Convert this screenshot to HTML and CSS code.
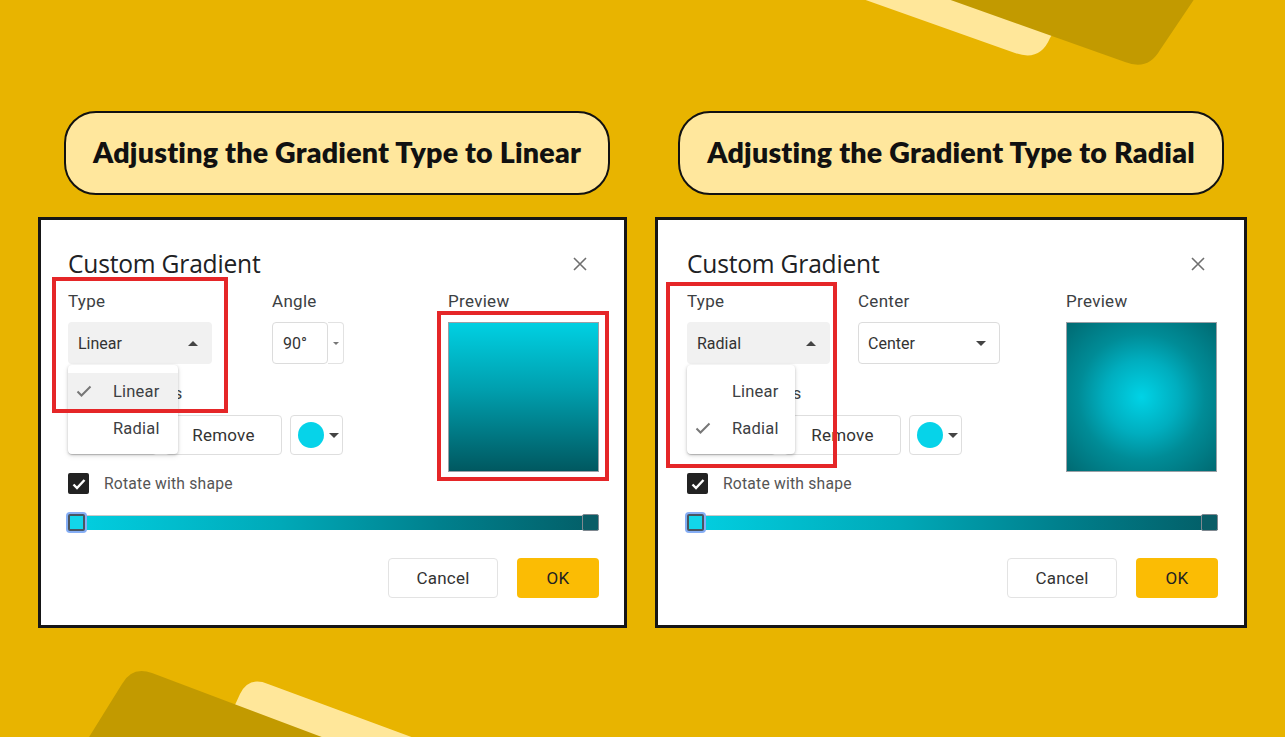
FILE: index.html
```html
<!DOCTYPE html>
<html lang="en">
<head>
<meta charset="utf-8">
<title>Custom Gradient</title>
<link rel="stylesheet" href="styles.css">
</head>
<body>
<div class="page">
  <svg class="deco" width="1285" height="737" viewBox="0 0 1285 737" aria-hidden="true">
    <path class="deco-light" d="M860,-2 L1015,53 Q1040,62 1050,38 L1075,-2 Z"/>
    <path class="deco-dark" d="M945,-2 L1125,62 Q1148,71 1160,50 L1195,-2 Z"/>
    <path class="deco-light" d="M218,742 L240,694 Q249,676 268,684 L425,742 Z"/>
    <path class="deco-dark" d="M86,742 L122,684 Q132,666 152,673 L335,742 Z"/>
  </svg>

  <main class="panels">
    <section class="panel panel-left">
      <div class="pill pill-left">Adjusting the Gradient Type to Linear</div>
      <div class="dialog dialog-left">
        <div class="dlg-head">
          <span class="dlg-title">Custom Gradient</span>
          <svg class="close" width="14" height="14" viewBox="0 0 14 14"><path d="M1 1L13 13M13 1L1 13"/></svg>
        </div>
        <div class="dlg-body">
          <div class="controls">
            <div class="label-row">
              <span class="lbl lbl-type">Type</span>
              <span class="lbl">Angle</span>
            </div>
            <div class="ctrl-row">
              <div class="select select-open"><span>Linear</span><i class="tri tri-up"></i></div>
              <div class="angle">
                <div class="angle-box">90°</div>
                <div class="angle-spin"><i class="tri tri-tiny"></i></div>
              </div>
            </div>
            <div class="lbl stops-lbl">Gradient stops</div>
            <div class="btn-row">
              <div class="btn btn-add">Add</div>
              <div class="btn btn-remove">Remove</div>
              <div class="btn btn-color"><span class="swatch"></span><i class="tri tri-down"></i></div>
            </div>
            <div class="check-row">
              <span class="checkbox"><svg width="14" height="12" viewBox="0 0 14 12"><path d="M1.5 6.5L5 10L12.5 2"/></svg></span>
              <span class="check-lbl">Rotate with shape</span>
            </div>
          </div>
          <div class="preview-col">
            <span class="lbl">Preview</span>
            <div class="preview preview-linear"></div>
          </div>
        </div>
        <div class="slider">
          <span class="handle handle-start"></span>
          <span class="handle handle-end"></span>
        </div>
        <div class="dlg-foot">
          <div class="btn btn-cancel">Cancel</div>
          <div class="btn btn-ok">OK</div>
        </div>

        <div class="menu menu-left">
          <div class="menu-item menu-item-active"><svg class="tick" width="16" height="12" viewBox="0 0 16 12"><path d="M1.5 6.5L5.5 10.5L14.5 1.5"/></svg>Linear</div>
          <div class="menu-item">Radial</div>
        </div>
        <div class="hl hl-type-left"></div>
        <div class="hl hl-preview-left"></div>
      </div>
    </section>

    <section class="panel panel-right">
      <div class="pill pill-right">Adjusting the Gradient Type to Radial</div>
      <div class="dialog dialog-right">
        <div class="dlg-head">
          <span class="dlg-title">Custom Gradient</span>
          <svg class="close" width="14" height="14" viewBox="0 0 14 14"><path d="M1 1L13 13M13 1L1 13"/></svg>
        </div>
        <div class="dlg-body">
          <div class="controls">
            <div class="label-row">
              <span class="lbl lbl-type-r">Type</span>
              <span class="lbl">Center</span>
            </div>
            <div class="ctrl-row">
              <div class="select select-open select-r"><span>Radial</span><i class="tri tri-up"></i></div>
              <div class="select select-center"><span>Center</span><i class="tri tri-down"></i></div>
            </div>
            <div class="lbl stops-lbl">Gradient stops</div>
            <div class="btn-row">
              <div class="btn btn-add">Add</div>
              <div class="btn btn-remove">Remove</div>
              <div class="btn btn-color"><span class="swatch"></span><i class="tri tri-down"></i></div>
            </div>
            <div class="check-row">
              <span class="checkbox"><svg width="14" height="12" viewBox="0 0 14 12"><path d="M1.5 6.5L5 10L12.5 2"/></svg></span>
              <span class="check-lbl">Rotate with shape</span>
            </div>
          </div>
          <div class="preview-col">
            <span class="lbl">Preview</span>
            <div class="preview preview-radial"></div>
          </div>
        </div>
        <div class="slider">
          <span class="handle handle-start"></span>
          <span class="handle handle-end"></span>
        </div>
        <div class="dlg-foot">
          <div class="btn btn-cancel">Cancel</div>
          <div class="btn btn-ok">OK</div>
        </div>

        <div class="menu menu-right">
          <div class="menu-item">Linear</div>
          <div class="menu-item"><svg class="tick" width="16" height="12" viewBox="0 0 16 12"><path d="M1.5 6.5L5.5 10.5L14.5 1.5"/></svg>Radial</div>
        </div>
        <div class="hl hl-type-right"></div>
      </div>
    </section>
  </main>
</div>
</body>
</html>
```

FILE: styles.css
```css
* { box-sizing: border-box; }

html, body {
  margin: 0;
  padding: 0;
}

body {
  width: 1285px;
  height: 737px;
  overflow: hidden;
  background: #e8b400;
  font-family: Roboto, "Liberation Sans", Arial, sans-serif;
  color: #3c4043;
}

.page {
  position: relative;
  width: 1285px;
  height: 737px;
}

.deco {
  position: absolute;
  left: 0;
  top: 0;
}
.deco-light { fill: #ffe79a; }
.deco-dark { fill: #c29a00; }

.panels {
  position: relative;
  display: flex;
  gap: 28px;
  padding: 111px 0 0 38px;
}

.panel {
  display: flex;
  flex-direction: column;
}

.pill {
  width: 546px;
  height: 84px;
  border: 2.5px solid #111;
  border-radius: 32px;
  background: #ffe79d;
  display: flex;
  align-items: center;
  justify-content: center;
  font-family: Lato, "Open Sans", sans-serif;
  font-weight: 800;
  font-size: 28.6px;
  color: #111;
  letter-spacing: 0.2px;
  padding-bottom: 3px;
}
.pill-left { margin-left: 26px; }
.pill-right { margin-left: 23px; }

/* Dialog */
.dialog {
  position: relative;
  margin-top: 22px;
  height: 411px;
  background: #fff;
  border: 3px solid #161616;
  display: flex;
  flex-direction: column;
  padding-top: 30px;
}
.dialog-left {
  width: 589px;
  padding-left: 27px;
  padding-right: 25px;
}
.dialog-right {
  width: 592px;
  padding-left: 29px;
  padding-right: 27px;
}

.dlg-head {
  height: 28px;
  display: flex;
  align-items: center;
  justify-content: space-between;
}
.dlg-title {
  font-family: "Open Sans", Roboto, sans-serif;
  font-size: 24.6px;
  line-height: 28px;
  color: #202124;
  letter-spacing: -0.2px;
}
.close {
  margin-right: 12px;
}
.close path {
  stroke: #6f6f6f;
  stroke-width: 1.6;
  fill: none;
}

.dlg-body {
  display: flex;
  margin-top: 14px;
}
.controls {
  width: 381px;
  display: flex;
  flex-direction: column;
}
.lbl {
  font-size: 17px;
  line-height: 18px;
  color: #3c4043;
  letter-spacing: 0.3px;
}
.label-row {
  display: flex;
}
.lbl-type { width: 204px; }
.lbl-type-r { width: 171px; }

.ctrl-row {
  display: flex;
  margin-top: 12px;
  height: 42px;
}
.select {
  height: 42px;
  border-radius: 4px;
  display: flex;
  align-items: center;
  justify-content: space-between;
  padding: 0 14px 0 10px;
  font-size: 16px;
  color: #333;
}
.select-open {
  width: 144px;
  background: #f1f1f1;
  margin-right: 60px;
}
.select-r {
  width: 143px;
  margin-right: 28px;
}
.select-center {
  width: 142px;
  border: 1px solid #dcdcdc;
  background: #fff;
  padding: 0 13px 0 9px;
}

.tri {
  display: block;
  width: 0;
  height: 0;
  border-left: 5px solid transparent;
  border-right: 5px solid transparent;
}
.tri-up { border-bottom: 5px solid #444; }
.tri-down { border-top: 5px solid #444; }
.tri-tiny {
  border-left-width: 3px;
  border-right-width: 3px;
  border-top: 3px solid #777;
}

.angle {
  display: flex;
  height: 42px;
}
.angle-box {
  width: 56px;
  height: 42px;
  border: 1px solid #dcdcdc;
  border-radius: 4px;
  display: flex;
  align-items: center;
  padding-left: 10px;
  font-size: 16px;
  color: #333;
}
.angle-spin {
  width: 16px;
  height: 42px;
  border: 1px solid #e2e2e2;
  border-left: none;
  border-radius: 0 4px 4px 0;
  display: flex;
  align-items: center;
  justify-content: center;
}

.stops-lbl {
  margin-top: 20px;
}

.btn-row {
  display: flex;
  gap: 8px;
  margin-top: 13px;
  height: 40px;
}
.btn {
  height: 40px;
  border: 1px solid #dedede;
  border-radius: 4px;
  background: #fff;
  display: flex;
  align-items: center;
  justify-content: center;
  font-size: 17px;
  color: #333;
  letter-spacing: 0.2px;
}
.btn-add { width: 89px; }
.btn-remove { width: 117px; }
.btn-color {
  width: 53px;
  justify-content: flex-start;
  padding-left: 7px;
  gap: 5px;
}
.swatch {
  width: 26px;
  height: 26px;
  border-radius: 50%;
  background: #06d3e9;
}

.check-row {
  display: flex;
  align-items: center;
  margin-top: 18px;
  height: 21px;
}
.checkbox {
  width: 21px;
  height: 21px;
  border-radius: 2px;
  background: #222;
  display: flex;
  align-items: center;
  justify-content: center;
}
.checkbox path {
  fill: none;
  stroke: #fff;
  stroke-width: 2.4;
}
.check-lbl {
  margin-left: 15px;
  font-size: 15.7px;
  color: #555;
  letter-spacing: 0.2px;
}

.preview-col {
  display: flex;
  flex-direction: column;
}
.preview {
  margin-top: 12px;
  width: 151px;
  height: 150px;
  border: 1px solid #9aa0a6;
}
.preview-linear {
  background: linear-gradient(180deg, #00d0e2 0%, #009fae 45%, #005860 100%);
}
.preview-radial {
  background: radial-gradient(circle at 50% 50%, #00d3e6 0%, #00aebf 35%, #008c97 60%, #006a72 100%);
}

.slider {
  position: relative;
  margin-top: 21px;
  height: 15px;
  width: 531px;
  background: linear-gradient(90deg, #02d0e2 0%, #00a9b8 40%, #00808d 70%, #035d66 100%);
  border-top: 1px solid #c9c9c9;
}
.handle {
  position: absolute;
  top: -2px;
  width: 17px;
  height: 17px;
  border-radius: 2px;
}
.handle-start {
  left: 0;
  background: #12d6ea;
  border: 2px solid #4a5560;
  box-shadow: 0 0 0 2px #86aef5;
}
.handle-end {
  right: 0;
  background: #0a5d66;
  border: 1.5px solid #808890;
}

.dlg-foot {
  display: flex;
  justify-content: flex-end;
  gap: 19px;
  margin-top: 28px;
  width: 531px;
}
.btn-cancel {
  width: 110px;
  border-color: #e3e3e3;
}
.btn-ok {
  width: 82px;
  border: none;
  background: #fbbc04;
  color: #222;
}

/* Dropdown menu overlay */
.menu {
  position: absolute;
  top: 145px;
  height: 89px;
  background: #fff;
  border-radius: 4px;
  box-shadow: 0 1px 3px rgba(0,0,0,0.22), 0 2px 6px rgba(0,0,0,0.08);
  padding-top: 8px;
}
.menu-left { left: 27px; width: 110px; }
.menu-right { left: 29px; width: 108px; }
.menu-item {
  position: relative;
  height: 37px;
  display: flex;
  align-items: center;
  padding-left: 45px;
  font-size: 16.5px;
  color: #3c4043;
  letter-spacing: 0.2px;
}
.menu-item-active { background: #f1f1f1; }
.tick {
  position: absolute;
  left: 8px;
  top: 12px;
}
.tick path {
  fill: none;
  stroke: #777;
  stroke-width: 2;
}

/* Red highlight boxes */
.hl {
  position: absolute;
  border: 4px solid #e52628;
}
.hl-type-left { left: 11px; top: 57px; width: 176px; height: 136px; }
.hl-preview-left { left: 396px; top: 91px; width: 172px; height: 170px; }
.hl-type-right { left: 8px; top: 62px; width: 171px; height: 186px; }
```
